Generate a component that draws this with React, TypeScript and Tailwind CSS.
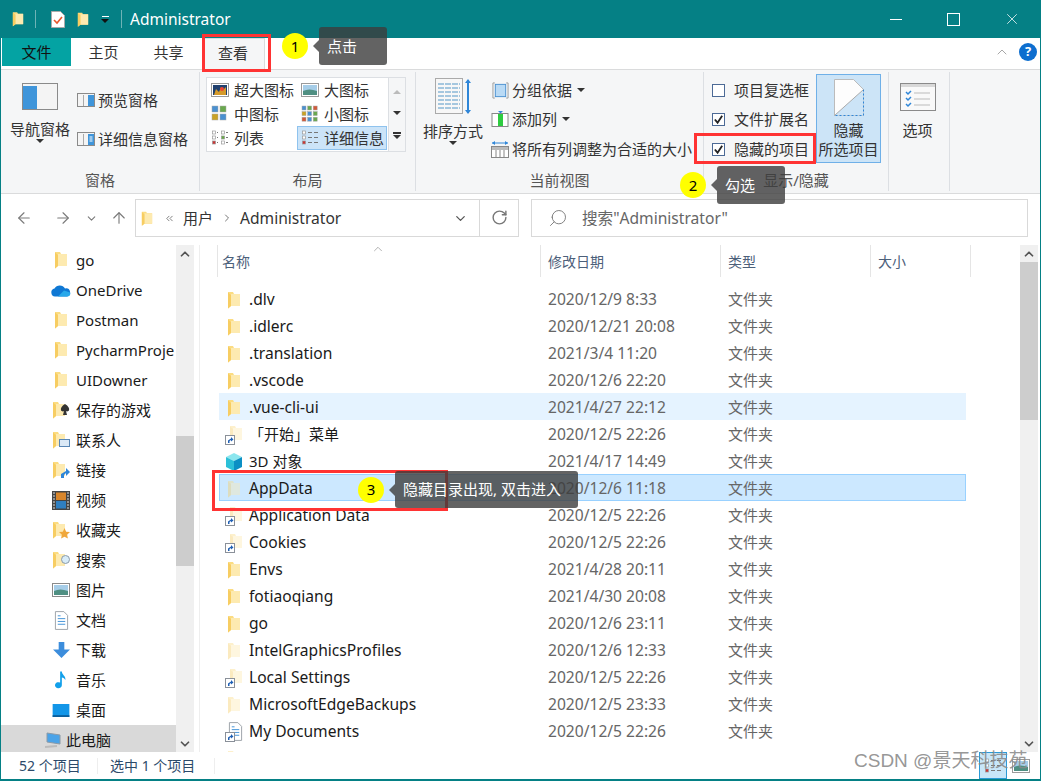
import type { ReactNode } from 'react'
import { ArrowLeft, ArrowRight, ArrowUp, ChevronDown, ChevronRight, ChevronUp, ChevronsLeft, RotateCw, Search, X } from 'lucide-react'

function Folder({ faded = false, className = 'w-[14px] h-[18px]' }: { faded?: boolean; className?: string }) {
  return (
    <svg viewBox="0 0 14 18" className={className + (faded ? ' opacity-40' : '')}>
      <path d="M1 1h5l1 2h6v12H4l-3 2.500z" fill="#fbdc82" />
      <path d="M4 3h9v12H4z" fill="#fdeab0" />
      <path d="M1 1.500 4 4v11l-3 2.500z" fill="#f7cd62" />
    </svg>
  )
}

function Shortcut() {
  return (
    <svg viewBox="0 0 10 10" className="absolute left-0 bottom-0 w-[10px] h-[10px]">
      <rect x="0.500" y="0.500" width="9" height="9" fill="#fff" stroke="#8a9099" />
      <path d="M3 8V5.500L6 3.500V2l2.500 2.500L6 6.500V5L4.500 6v2z" fill="#1f5fb4" />
    </svg>
  )
}

function Cube() {
  return (
    <svg viewBox="0 0 20 20" className="w-[20px] h-[20px] shrink-0">
      <path d="M10 1l8 4-8 4-8-4z" fill="#8ce6ee" />
      <path d="M2 5l8 4v10l-8-4z" fill="#2cc0d8" />
      <path d="M18 5l-8 4v10l8-4z" fill="#0b8fc4" />
    </svg>
  )
}

function DocIcon() {
  return (
    <svg viewBox="0 0 16 20" className="w-[15px] h-[19px]">
      <path d="M1.500.500h9l4 4v15h-13z" fill="#fff" stroke="#9aa0a6" />
      <path d="M4 5h3M4 8h8M4 11h8M4 14h8" stroke="#3d8fd6" strokeWidth="1" />
    </svg>
  )
}

function Thumb({ kind }: { kind: 'xl' | 'l' | 'm' | 's' | 'list' | 'detail' }) {
  if (kind === 'xl' || kind === 'l') {
    return (
      <svg viewBox="0 0 18 14" className="w-[18px] h-[14px]">
        <rect x="0.500" y="0.500" width="17" height="13" fill="#fff" stroke="#9a9a9a" />
        {kind === 'xl' ? (
          <>
            <rect x="2" y="2" width="14" height="10" fill="#20406e" />
            <path d="M3 12l2-6 3 3 2-5 2 3 3-3v8z" fill="#d59a2a" />
            <circle cx="11" cy="6" r="2" fill="#e43" />
          </>
        ) : (
          <>
            <rect x="2" y="2" width="14" height="10" fill="#a6cde8" />
            <path d="M2 8q6-3 14 0v4H2z" fill="#4f8f82" />
          </>
        )}
      </svg>
    )
  }
  if (kind === 'm' || kind === 's') {
    const cells = kind === 'm' ? [0, 1] : [0, 1, 2]
    const step = kind === 'm' ? 8 : 5.600
    const size = kind === 'm' ? 6 : 4
    const colors = ['#4a90d0', '#6aa84f', '#d05a3a', '#c9a227', '#4a90d0', '#6aa84f', '#d05a3a', '#4a90d0', '#6aa84f']
    return (
      <svg viewBox="0 0 18 18" className="w-[18px] h-[18px]">
        {cells.map((r) =>
          cells.map((c) => (
            <rect key={`${r}-${c}`} x={1 + c * step} y={1 + r * step} width={size} height={size} fill={colors[r * 3 + c]} stroke="#aaa" strokeWidth="0.500" />
          )),
        )}
      </svg>
    )
  }
  return (
    <svg viewBox="0 0 18 16" className="w-[18px] h-[16px]">
      {[1, 6, 11].map((y, i) => (
        <g key={y}>
          <rect x="1.500" y={y} width="3" height="3" fill={i === 2 ? '#c33' : '#fff'} stroke="#999" strokeWidth="0.700" />
          {kind === 'list' ? (
            <>
              <path d={`M6 ${y + 1.500}h1`} stroke="#777" />
              <rect x="10.500" y={y} width="3" height="3" fill={i === 1 ? '#6a4' : '#fff'} stroke="#999" strokeWidth="0.700" />
              <path d={`M15 ${y + 1.500}h2`} stroke="#777" />
            </>
          ) : (
            <path d={`M7 ${y + 1.500}h4M13 ${y + 1.500}h4`} stroke="#777" />
          )}
        </g>
      ))}
    </svg>
  )
}

function PaneIcon({ right }: { right: 'preview' | 'detail' }) {
  return (
    <svg viewBox="0 0 18 14" className="w-[18px] h-[14px]">
      <rect x="0.500" y="0.500" width="17" height="13" fill="#f4f4f4" stroke="#8a8a8a" />
      <rect x="6" y="2" width="1" height="11" fill="#aaa" />
      <rect x="11" y="2" width="6" height="11" fill="#3f95da" />
      {right === 'detail' && <path d="M12.500 5h3M12.500 7h3M12.500 9h3" stroke="#fff" />}
    </svg>
  )
}

function Caret() {
  return <div className="w-0 h-0 border-x-[4px] border-x-transparent border-t-[4px] border-t-[#333]" />
}

function RibbonLabel({ children, icon }: { children: ReactNode; icon: ReactNode }) {
  return (
    <div className="flex items-center h-[20px] whitespace-nowrap">
      <div className="w-[18px] flex justify-center">{icon}</div>
      <span className="ml-[3px]">{children}</span>
    </div>
  )
}

function Group({ label, className, children }: { label: string; className: string; children: ReactNode }) {
  return (
    <div className={'flex flex-col h-[119px] mt-[2px] border-r border-[#dcdfe3] shrink-0 ' + className}>
      <div className="flex-1 flex items-start">{children}</div>
      <div className="h-[24px] text-center text-[15px] leading-[26px] text-[#555]">{label}</div>
    </div>
  )
}

function Check({ on, label }: { on: boolean; label: string }) {
  return (
    <div className="flex items-center h-[20px]">
      <div className="w-[13px] h-[13px] border border-[#4c6a96] bg-white flex items-center justify-center">
        {on && (
          <svg viewBox="0 0 12 12" className="w-[11px] h-[11px]">
            <path d="M2 6l3 3.500L10 2" fill="none" stroke="#222" strokeWidth="2" />
          </svg>
        )}
      </div>
      <span className="ml-[9px] whitespace-nowrap">{label}</span>
    </div>
  )
}

function GalleryItem({ kind, label, active = false }: { kind: 'xl' | 'l' | 'm' | 's' | 'list' | 'detail'; label: string; active?: boolean }) {
  return (
    <div className={'flex items-center h-[24px] border ' + (active ? 'bg-[#cce4f8] border-[#8fc3ee]' : 'border-transparent')}>
      <div className="w-[24px] flex justify-center">
        <Thumb kind={kind} />
      </div>
      <span className="ml-[2px] whitespace-nowrap">{label}</span>
    </div>
  )
}

function Scrollbar({ top, thumb }: { top: string; thumb: string }) {
  return (
    <div className="w-[18px] shrink-0 bg-[#f0f0f0] flex flex-col items-center">
      <div className="h-[17px] flex items-center justify-center">
        <ChevronUp className="w-[14px] h-[14px] text-[#555]" strokeWidth={3} />
      </div>
      <div className={'w-full bg-[#cdcdcd] ' + top + ' ' + thumb} />
      <div className="mt-auto h-[17px] flex items-center justify-center">
        <ChevronDown className="w-[14px] h-[14px] text-[#555]" strokeWidth={3} />
      </div>
    </div>
  )
}

function Annotation({ n, text, className, tipClass }: { n: number; text: string; className: string; tipClass: string }) {
  return (
    <div className={'absolute flex items-center ' + className}>
      <div className="w-[26px] h-[26px] rounded-full bg-[#ffff00] flex items-center justify-center text-[15px] text-black">{n}</div>
      <div className={'relative ml-[11px] rounded-[3px] px-[8px] flex items-center text-white text-[15px] whitespace-nowrap bg-[#3c3c3c]/80 ' + tipClass}>
        <div className="absolute -left-[6px] top-1/2 -mt-[6px] w-0 h-0 border-y-[6px] border-y-transparent border-r-[6px] border-r-[#3c3c3c]/80" />
        {text}
      </div>
    </div>
  )
}

const navItems: { name: string; icon: ReactNode }[] = [
  { name: 'go', icon: <Folder /> },
  {
    name: 'OneDrive',
    icon: (
      <svg viewBox="0 0 20 12" className="w-[20px] h-[13px]">
        <path d="M4 12a4 4 0 0 1-.5-7.900A6 6 0 0 1 14 4a4 4 0 0 1 2 8z" fill="#0f78d4" />
        <path d="M7 12l6-6 6 2a3 3 0 0 1-2 4z" fill="#28a8ea" />
      </svg>
    ),
  },
  { name: 'Postman', icon: <Folder /> },
  { name: 'PycharmProje', icon: <Folder /> },
  { name: 'UIDowner', icon: <Folder /> },
  {
    name: '保存的游戏',
    icon: (
      <div className="relative w-[18px] h-[18px]">
        <Folder />
        <svg viewBox="0 0 10 12" className="absolute right-0 top-[3px] w-[10px] h-[12px]">
          <path d="M5 0q5 3 4 6.500Q7 8 6 7l1 4H3l1-4Q3 8 1 6.500 0 3 5 0z" fill="#333" />
        </svg>
      </div>
    ),
  },
  {
    name: '联系人',
    icon: (
      <div className="relative w-[18px] h-[18px]">
        <Folder />
        <div className="absolute right-0 bottom-[2px] w-[11px] h-[8px] bg-[#dbe9f6] border border-[#5a87b5]" />
      </div>
    ),
  },
  {
    name: '链接',
    icon: (
      <div className="relative w-[18px] h-[18px]">
        <Folder />
        <svg viewBox="0 0 10 10" className="absolute right-0 bottom-[1px] w-[10px] h-[10px]">
          <path d="M1 10V6l5-3V0l4 4-4 4V5L4 7v3z" fill="#2f86d8" />
        </svg>
      </div>
    ),
  },
  {
    name: '视频',
    icon: (
      <svg viewBox="0 0 18 19" className="w-[18px] h-[19px]">
        <rect width="18" height="19" fill="#444" />
        <rect x="4" y="1.500" width="10" height="7.500" fill="#d9862b" />
        <rect x="4" y="10" width="10" height="7.500" fill="#2f7fc1" />
        <path d="M1 2h2M1 5h2M1 8h2M1 11h2M1 14h2M1 17h2M15 2h2M15 5h2M15 8h2M15 11h2M15 14h2M15 17h2" stroke="#ddd" />
      </svg>
    ),
  },
  {
    name: '收藏夹',
    icon: (
      <div className="relative w-[18px] h-[18px]">
        <Folder />
        <svg viewBox="0 0 10 10" className="absolute right-0 bottom-0 w-[11px] h-[11px]">
          <path d="M5 0l1.500 3.300 3.500.4-2.600 2.400.7 3.500L5 8l-3.100 1.600.7-3.500L0 3.700l3.500-.4z" fill="#f0a83c" />
        </svg>
      </div>
    ),
  },
  {
    name: '搜索',
    icon: (
      <div className="relative w-[18px] h-[18px]">
        <Folder />
        <div className="absolute right-0 top-[4px] w-[9px] h-[9px] rounded-full bg-[#d8ecf8] border border-[#8a9aa8]" />
      </div>
    ),
  },
  {
    name: '图片',
    icon: (
      <svg viewBox="0 0 18 14" className="w-[18px] h-[14px]">
        <rect x="0.500" y="0.500" width="17" height="13" fill="#fff" stroke="#8a8a8a" />
        <rect x="2" y="2" width="14" height="10" fill="#a6cde8" />
        <path d="M2 8q6-3 14 0v4H2z" fill="#4f8f82" />
      </svg>
    ),
  },
  { name: '文档', icon: <DocIcon /> },
  {
    name: '下载',
    icon: (
      <svg viewBox="0 0 18 17" className="w-[17px] h-[16px]">
        <path d="M6 0h6v8h6l-9 9-9-9h6z" fill="#3c8ddc" />
      </svg>
    ),
  },
  {
    name: '音乐',
    icon: (
      <svg viewBox="0 0 14 20" className="w-[12px] h-[18px]">
        <path d="M6 0h2c0 4 5 5 4 10-1-2-2-3-4-3v9a4 3.500 0 1 1-2-3z" fill="#13a0ea" />
      </svg>
    ),
  },
  {
    name: '桌面',
    icon: (
      <svg viewBox="0 0 18 14" className="w-[18px] h-[13px]">
        <rect width="18" height="14" fill="#1396e8" />
        <rect y="12" width="18" height="2" fill="#0b5f9c" />
      </svg>
    ),
  },
]

type Row = { name: string; date: string; icon?: 'shortcut' | 'faded' | 'cube' | 'doc'; state?: 'hover' | 'selected' }

const rows: Row[] = [
  { name: '.dlv', date: '2020/12/9 8:33' },
  { name: '.idlerc', date: '2020/12/21 20:08' },
  { name: '.translation', date: '2021/3/4 11:20' },
  { name: '.vscode', date: '2020/12/6 22:20' },
  { name: '.vue-cli-ui', date: '2021/4/27 22:12', state: 'hover' },
  { name: '「开始」菜单', date: '2020/12/5 22:26', icon: 'shortcut' },
  { name: '3D 对象', date: '2021/4/17 14:49', icon: 'cube' },
  { name: 'AppData', date: '2020/12/6 11:18', icon: 'faded', state: 'selected' },
  { name: 'Application Data', date: '2020/12/5 22:26', icon: 'shortcut' },
  { name: 'Cookies', date: '2020/12/5 22:26', icon: 'shortcut' },
  { name: 'Envs', date: '2021/4/28 20:11' },
  { name: 'fotiaoqiang', date: '2021/4/30 20:08' },
  { name: 'go', date: '2020/12/6 23:11' },
  { name: 'IntelGraphicsProfiles', date: '2020/12/6 12:33', icon: 'faded' },
  { name: 'Local Settings', date: '2020/12/5 22:26', icon: 'shortcut' },
  { name: 'MicrosoftEdgeBackups', date: '2020/12/5 23:33', icon: 'faded' },
  { name: 'My Documents', date: '2020/12/5 22:26', icon: 'doc' },
  { name: '', date: '', icon: 'faded' },
]

function RowIcon({ icon }: { icon?: Row['icon'] }) {
  if (icon === 'cube') return <Cube />
  if (icon === 'doc') {
    return (
      <div className="relative w-[18px] h-[20px] flex justify-end">
        <DocIcon />
        <Shortcut />
      </div>
    )
  }
  if (icon === 'shortcut') {
    return (
      <div className="relative w-[18px] h-[20px] flex justify-end">
        <Folder faded />
        <Shortcut />
      </div>
    )
  }
  return <Folder faded={icon === 'faded'} />
}

export default function App() {
  return (
    <div className="relative w-[1041px] h-[781px] overflow-hidden flex flex-col bg-white border-x border-b-2 border-[#058085] text-[15px] text-[#1a1a1a] font-['Noto_Sans','Noto_Sans_CJK_SC',sans-serif]">
      {/* title bar */}
      <div className="h-[38px] shrink-0 -mx-px bg-[#058085] flex items-center text-white">
        <div className="ml-[12px]">
          <Folder className="w-[12px] h-[16px]" />
        </div>
        <div className="ml-[11px] w-px h-[18px] bg-[#6fb3b6]" />
        <svg viewBox="0 0 14 17" className="ml-[15px] w-[14px] h-[17px]">
          <path d="M.5.500h9l4 4v12H.5z" fill="#fff" stroke="#aaa" />
          <path d="M3 9l3 3 5-6" fill="none" stroke="#e8562a" strokeWidth="1.600" />
        </svg>
        <div className="ml-[12px]">
          <Folder className="w-[12px] h-[17px]" />
        </div>
        <div className="ml-[12px] flex flex-col items-center gap-[2px]">
          <div className="w-[7px] h-px bg-white" />
          <div className="w-0 h-0 border-x-[4px] border-x-transparent border-t-[4px] border-t-[#111]" />
        </div>
        <div className="ml-[12px] w-px h-[18px] bg-[#6fb3b6]" />
        <span className="ml-[8px] pt-px text-[15.500px]">Administrator</span>
        <div className="ml-auto flex items-center">
          <div className="w-[12px] h-px bg-white" />
          <div className="ml-[45px] w-[13px] h-[13px] border border-white" />
          <X className="ml-[43px] mr-[20px] w-[18px] h-[18px]" strokeWidth={1} />
        </div>
      </div>

      {/* tabs */}
      <div className="h-[32px] shrink-0 flex items-stretch border-b border-[#dadbdc] text-[#333]">
        <div className="ml-px w-[69px] h-[28px] bg-[#04a3a3] flex items-center justify-center text-[#111]">文件</div>
        <div className="w-[65px] h-[28px] flex items-center justify-center">主页</div>
        <div className="w-[65px] h-[28px] flex items-center justify-center">共享</div>
        <div className="ml-[3px] w-[61px] h-[32px] pb-[3px] pr-[3px] bg-[#f5f6f7] border-x border-t border-[#dadbdc] flex items-center justify-center">查看</div>
        <div className="ml-auto flex items-center mb-[3px]">
          <ChevronUp className="w-[16px] h-[16px] text-[#999]" strokeWidth={1.300} />
          <div className="ml-[9px] mr-[3px] w-[18px] h-[18px] rounded-full bg-[#0d6ecf] text-white text-[13px] font-bold flex items-center justify-center">?</div>
        </div>
      </div>

      {/* ribbon */}
      <div className="h-[124px] shrink-0 flex bg-[#f5f6f7] border-b border-[#dadbdc] text-[#333] leading-[20px]">
        <Group label="窗格" className="w-[199px]">
          <div className="ml-[9px] w-[60px] mt-[11px] flex flex-col items-center">
            <svg viewBox="0 0 36 27" className="w-[36px] h-[27px]">
              <rect x="0.500" y="0.500" width="35" height="26" fill="#f4f4f4" stroke="#8a8a8a" />
              <rect x="1" y="3" width="14" height="23" fill="#3f95da" />
            </svg>
            <div className="mt-[9px] whitespace-nowrap">导航窗格</div>
            <Caret />
          </div>
          <div className="ml-[7px] mt-[18px] flex flex-col gap-[19px]">
            <RibbonLabel icon={<PaneIcon right="preview" />}>预览窗格</RibbonLabel>
            <RibbonLabel icon={<PaneIcon right="detail" />}>详细信息窗格</RibbonLabel>
          </div>
        </Group>

        <Group label="布局" className="w-[216px]">
          <div className="ml-[6px] mt-[5px] w-[183px] h-[75px] bg-white border border-[#dcdfe3] grid grid-cols-[90px_90px] content-start">
            <GalleryItem kind="xl" label="超大图标" />
            <GalleryItem kind="l" label="大图标" />
            <GalleryItem kind="m" label="中图标" />
            <GalleryItem kind="s" label="小图标" />
            <GalleryItem kind="list" label="列表" />
            <GalleryItem kind="detail" label="详细信息" active />
          </div>
          <div className="mt-[5px] w-[17px] h-[75px] border border-l-0 border-[#dcdfe3] flex flex-col items-center justify-around py-[4px]">
            <div className="w-0 h-0 border-x-[4px] border-x-transparent border-b-[4px] border-b-[#bbb]" />
            <Caret />
            <div className="flex flex-col items-center gap-[1px]">
              <div className="w-[8px] h-[2px] bg-[#333]" />
              <Caret />
            </div>
          </div>
        </Group>

        <Group label="当前视图" className="w-[288px]">
          <div className="ml-[7px] w-[60px] mt-[6px] flex flex-col items-center">
            <svg viewBox="0 0 37 37" className="w-[37px] h-[37px]">
              <rect x="0.500" y="0.500" width="27" height="35" fill="#f7f7f7" stroke="#aaa" />
              <path d="M3 6h22M3 10h22M3 14h22M3 18h22M3 22h22M3 26h22M3 30h22" stroke="#8ab8d8" strokeWidth="1.500" strokeDasharray="6 1" />
              <path d="M33 2v33" stroke="#2f86d8" strokeWidth="2" />
              <path d="M30 5l3-4 3 4zM30 32l3 4 3-4z" fill="#2f86d8" />
            </svg>
            <div className="mt-[6px] whitespace-nowrap">排序方式</div>
            <Caret />
          </div>
          <div className="ml-[8px] mt-[8px] flex flex-col gap-[9px]">
            <RibbonLabel
              icon={
                <svg viewBox="0 0 18 18" className="w-[17px] h-[17px]">
                  <path d="M3 1H1v16h2M15 1h2v16h-2" fill="none" stroke="#999" />
                  <rect x="3.500" y="2.500" width="11" height="13" fill="#b9daf5" stroke="#4a90d0" />
                </svg>
              }
            >
              <span className="flex items-center gap-[5px]">
                分组依据 <Caret />
              </span>
            </RibbonLabel>
            <RibbonLabel
              icon={
                <svg viewBox="0 0 18 18" className="w-[18px] h-[18px]">
                  <rect x="1" y="3.500" width="16" height="13" fill="#fff" stroke="#888" />
                  <rect x="7" y="4" width="5" height="12" fill="#2ecc40" />
                  <path d="M7 1h5l-2.500 2.500z" fill="#2f86d8" />
                </svg>
              }
            >
              <span className="flex items-center gap-[5px]">
                添加列 <Caret />
              </span>
            </RibbonLabel>
            <div className="mt-px">
              <RibbonLabel
                icon={
                  <svg viewBox="0 0 18 18" className="w-[18px] h-[18px]">
                    <path d="M1 3h16" stroke="#2f86d8" />
                    <path d="M4 1L1 3l3 2zM14 1l3 2-3 2z" fill="#2f86d8" />
                    <rect x="0.500" y="6.500" width="17" height="11" fill="#fff" stroke="#888" />
                    <rect x="1" y="7" width="16" height="3" fill="#bbb" />
                    <path d="M5 10v7M9 10v7M13 10v7" stroke="#888" />
                  </svg>
                }
              >
                将所有列调整为合适的大小
              </RibbonLabel>
            </div>
          </div>
        </Group>

        <Group label="显示/隐藏" className="w-[185px]">
          <div className="ml-[8px] mt-[8px] flex flex-col gap-[9px]">
            <Check on={false} label="项目复选框" />
            <Check on label="文件扩展名" />
            <div className="mt-px">
              <Check on label="隐藏的项目" />
            </div>
          </div>
          <div className="ml-auto mr-[7px] mt-[2px] w-[65px] h-[89px] bg-[#cce4f7] border border-[#6fb0e8] flex flex-col items-center">
            <svg viewBox="0 0 30 37" className="mt-[4px] w-[30px] h-[37px]">
              <path d="M.5.500h19l10 10v26H.5z" fill="#fdfdfd" stroke="#bbb" />
              <path d="M29.500 10.500v26H.5" fill="#cce4f7" stroke="#2f86d8" strokeDasharray="2 2" />
              <path d="M.5 36.500L29.500 10.500" stroke="#aaa" fill="none" />
            </svg>
            <div className="mt-[5px] leading-[19px] text-center whitespace-nowrap">
              隐藏
              <br />
              所选项目
            </div>
          </div>
        </Group>

        <Group label="" className="w-[61px]">
          <div className="w-full pr-[3px] mt-[11px] flex flex-col items-center">
            <svg viewBox="0 0 36 28" className="w-[36px] h-[28px]">
              <rect x="0.500" y="0.500" width="35" height="27" fill="#f9f9f9" stroke="#8a8a8a" />
              <rect x="1" y="1" width="34" height="3" fill="#d8d8d8" />
              <path d="M6 9l2 2 3-3M6 15l2 2 3-3M6 21l2 2 3-3" fill="none" stroke="#2f86d8" strokeWidth="1.500" />
              <path d="M14 10h16M14 16h16M14 22h16" stroke="#bbb" />
            </svg>
            <div className="mt-[9px]">选项</div>
          </div>
        </Group>
      </div>

      {/* address bar */}
      <div className="h-[51px] shrink-0 flex items-start pt-[5px] text-[#333]">
        <div className="flex items-center h-[38px] text-[#7a7a7a]">
          <ArrowLeft className="ml-[14px] w-[18px] h-[18px]" strokeWidth={1.500} />
          <ArrowRight className="ml-[21px] w-[18px] h-[18px]" strokeWidth={1.500} />
          <ChevronDown className="ml-[13px] w-[13px] h-[13px]" strokeWidth={2} />
          <ArrowUp className="ml-[12px] w-[18px] h-[18px]" strokeWidth={1.500} />
        </div>
        <div className="ml-[7px] w-[384px] h-[38px] border border-[#d9d9d9] flex items-center">
          <div className="ml-[5px]">
            <Folder className="w-[12px] h-[17px]" />
          </div>
          <ChevronsLeft className="ml-[11px] w-[11px] h-[11px] text-[#777]" />
          <span className="ml-[8px]">用户</span>
          <ChevronRight className="ml-[8px] w-[12px] h-[12px] text-[#777]" />
          <span className="ml-[7px] pt-px text-[15.600px]">Administrator</span>
          <ChevronDown className="ml-auto mr-[50px] w-[15px] h-[15px] text-[#555]" strokeWidth={2} />
          <div className="absolute left-[478px] top-[199px] h-[38px] w-px bg-[#d9d9d9]" />
          <RotateCw className="absolute left-[490px] top-[209px] w-[17px] h-[17px] text-[#777]" strokeWidth={2} />
        </div>
        <div className="ml-[12px] w-[497px] h-[38px] border border-[#d9d9d9] flex items-center text-[#666]">
          <Search className="ml-[16px] w-[20px] h-[20px] -scale-x-100 text-[#777]" strokeWidth={1.100} />
          <span className="ml-[14px] pt-px text-[15.600px]">搜索"Administrator"</span>
        </div>
      </div>

      {/* main */}
      <div className="flex-1 min-h-0 flex">
        <div className="w-[175px] shrink-0 overflow-hidden">
          {navItems.map((item) => (
            <div key={item.name} className="h-[30px] pl-[49px] flex items-center whitespace-nowrap">
              <div className="w-[22px] flex justify-center shrink-0">{item.icon}</div>
              <span className="ml-[4px]">{item.name}</span>
            </div>
          ))}
          <div className="h-[30px] pl-[43px] bg-[#d9d9d9] flex items-center whitespace-nowrap">
            <svg viewBox="0 0 18 16" className="w-[18px] h-[16px] shrink-0">
              <path d="M3 1l13 2v9L3 10z" fill="#4aa3e8" stroke="#8a9aa8" />
              <path d="M1 15l12-1" stroke="#bbb" strokeWidth="2" />
            </svg>
            <span className="ml-[4px]">此电脑</span>
          </div>
        </div>
        <Scrollbar top="mt-[174px]" thumb="h-[130px]" />

        <div className="ml-[5px] flex-1 min-w-0 overflow-hidden border-l border-[#eeeeee] relative">
          <div className="h-[32px] flex items-center text-[14px] text-[#4c607a]">
            <div className="ml-[17px] w-[324px] h-full border-x border-[#e5e5e5] pl-[4px] flex items-center">名称</div>
            <div className="w-[180px] h-full border-r border-[#e5e5e5] pl-[7px] flex items-center">修改日期</div>
            <div className="w-[150px] h-full border-r border-[#e5e5e5] pl-[7px] flex items-center">类型</div>
            <div className="w-[100px] h-full border-r border-[#e5e5e5] pl-[7px] flex items-center">大小</div>
          </div>
          <ChevronUp className="absolute left-[171px] -top-[3px] w-[14px] h-[14px] text-[#999]" strokeWidth={1.300} />
          <div className="pt-[8px]">
            {rows.map((row, i) => (
              <div
                key={i}
                className={
                  'ml-[19px] w-[747px] h-[27px] border pl-[5px] pt-[2px] flex items-center ' +
                  (row.state === 'hover'
                    ? 'bg-[#e5f3ff] border-[#e5f3ff]'
                    : row.state === 'selected'
                      ? 'bg-[#cce8ff] border-[#99d1ff]'
                      : 'border-transparent')
                }
              >
                <div className="w-[18px] flex justify-center shrink-0">
                  <RowIcon icon={row.icon} />
                </div>
                <div className={'ml-[6px] w-[299px] shrink-0 whitespace-nowrap ' + (/[\u4e00-\u9fff]/.test(row.name) ? 'text-[15px]' : 'text-[15.600px]')}>{row.name}</div>
                <div className="w-[180px] shrink-0 text-[15.600px] text-[#666] whitespace-nowrap">{row.date}</div>
                <div className="text-[#666]">{row.date && '文件夹'}</div>
              </div>
            ))}
          </div>
        </div>
        <Scrollbar top="" thumb="h-[158px]" />
        <div className="w-[2px] shrink-0" />
      </div>

      {/* status bar */}
      <div className="h-[27px] shrink-0 flex items-center text-[14px] text-[#2c4a6a] bg-white">
        <span className="ml-[18px] w-[78px]">52 个项目</span>
        <div className="w-px h-[16px] bg-[#eeeeee]" />
        <span className="ml-[12px] w-[104px]">选中 1 个项目</span>
        <div className="w-px h-[16px] bg-[#eeeeee]" />
        <div className="ml-auto flex items-center h-full">
          <div className="w-[28px] h-full bg-[#c8e6f8] border border-[#2c9ad6] flex items-center justify-center">
            <Thumb kind="detail" />
          </div>
          <div className="ml-[5px] mr-[10px]">
            <Thumb kind="l" />
          </div>
        </div>
      </div>

      {/* annotations */}
      <div className="absolute left-[201px] top-[34px] w-[69px] h-[38px] border-[3px] border-[#ff3333]" />
      <div className="absolute left-[693px] top-[133px] w-[122px] h-[31px] border-[3px] border-[#ff3333]" />
      <div className="absolute left-[211px] top-[470px] w-[236px] h-[41px] border-[3px] border-[#ff3333]" />
      <Annotation n={1} text="点击" className="left-[281px] top-[27px] h-[38px]" tipClass="w-[68px] h-[38px]" />
      <Annotation n={2} text="勾选" className="left-[679px] top-[166px] h-[38px]" tipClass="w-[68px] h-[38px]" />
      <Annotation n={3} text="隐藏目录出现, 双击进入" className="left-[357px] top-[471px] h-[37px]" tipClass="w-[183px] h-[37px]" />
      <div className="absolute left-[853px] top-[747px] text-[19px] text-[#8a8a8a]/90 whitespace-nowrap font-['Liberation_Sans','Noto_Sans_CJK_SC',sans-serif]">CSDN @景天科技苑</div>
    </div>
  )
}
